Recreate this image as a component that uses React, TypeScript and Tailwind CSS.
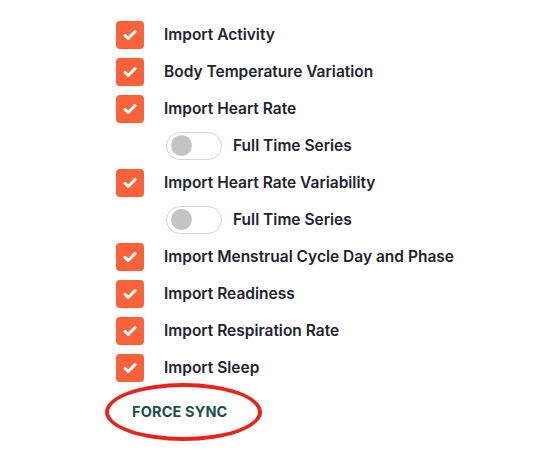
import { useState } from "react";

type Item =
  | { kind: "check"; label: string }
  | { kind: "toggle"; label: string };

const items: Item[] = [
  { kind: "check", label: "Import Activity" },
  { kind: "check", label: "Body Temperature Variation" },
  { kind: "check", label: "Import Heart Rate" },
  { kind: "toggle", label: "Full Time Series" },
  { kind: "check", label: "Import Heart Rate Variability" },
  { kind: "toggle", label: "Full Time Series" },
  { kind: "check", label: "Import Menstrual Cycle Day and Phase" },
  { kind: "check", label: "Import Readiness" },
  { kind: "check", label: "Import Respiration Rate" },
  { kind: "check", label: "Import Sleep" },
];

function CheckBox() {
  return (
    <span className="flex h-[28px] w-[28px] items-center justify-center rounded-[4px] bg-[#fb623a]">
      <svg width="16" height="16" viewBox="0 0 16 16" fill="none">
        <path
          d="M3 8.4l3.2 3.1L13 4.6"
          stroke="white"
          strokeWidth="3"
          strokeLinecap="round"
          strokeLinejoin="round"
        />
      </svg>
    </span>
  );
}

function Toggle() {
  return (
    <span className="flex h-[28px] w-[56px] items-center rounded-full border border-[#d4d4d4] bg-white px-[4px]">
      <span className="h-[21px] w-[21px] rounded-full bg-[#c4c4c4]" />
    </span>
  );
}

export default function App() {
  const [list] = useState(items);

  return (
    <div
      className="min-h-screen bg-white pt-[16px] pl-[116px] text-[15.5px] font-semibold text-[#1e2330]"
      style={{ fontFamily: "Inter, 'Noto Sans', sans-serif" }}
    >
      {list.map((item, i) =>
        item.kind === "check" ? (
          <div key={i} className="flex h-[37px] items-center gap-[20px]">
            <CheckBox />
            <span>{item.label}</span>
          </div>
        ) : (
          <div key={i} className="flex h-[37px] items-center gap-[11px] pl-[50px]">
            <Toggle />
            <span>{item.label}</span>
          </div>
        )
      )}
      <div className="relative mt-[8px] ml-[-11px] inline-flex h-[36px] items-center px-[27px]">
        <span className="text-[14.5px] font-bold tracking-[0.01em] text-[#1a4f4b]">FORCE SYNC</span>
        <span className="pointer-events-none absolute left-[0px] top-[-11px] h-[58px] w-[157px] rounded-[50%] border-[4px] border-[#e8231b]" />
      </div>
    </div>
  );
}
